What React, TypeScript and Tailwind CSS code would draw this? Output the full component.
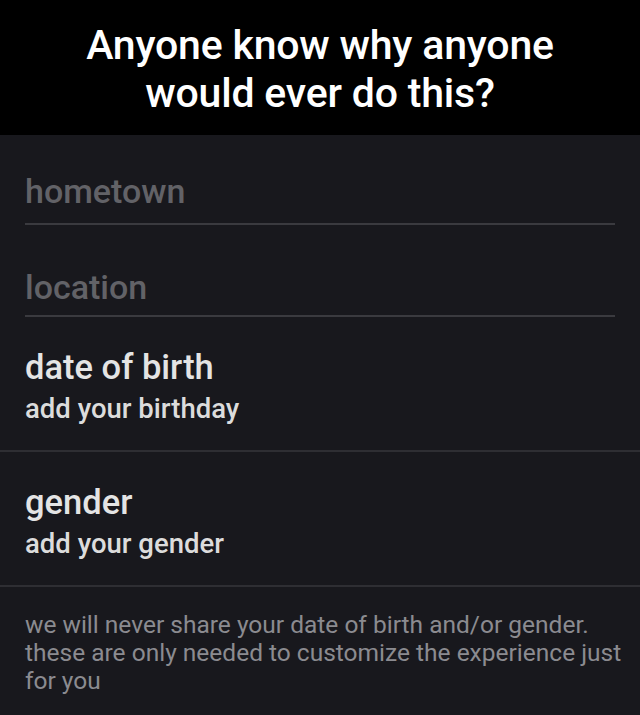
export default function App() {
  return (
    <div className="flex min-h-[715px] w-[640px] flex-col bg-[#18181d] font-['Roboto',sans-serif]">
      <div className="flex h-[135px] flex-col items-center bg-black pt-[21px] text-center text-[41px] font-medium leading-[48px] tracking-[-0.2px] text-white">
        <p>Anyone know why anyone</p>
        <p>would ever do this?</p>
      </div>

      <div className="px-[25px] pt-[36px] font-medium">
        <p className="text-[34px] leading-[40px] text-[#626267]">hometown</p>
        <div className="mt-[12px] h-[2px] bg-[#3a3a3f]" />
        <p className="mt-[42px] text-[34px] leading-[40px] text-[#626267]">location</p>
        <div className="mt-[8px] h-[2px] bg-[#3a3a3f]" />
      </div>

      <div className="border-b-2 border-[#2e2e33] px-[25px] pb-[24px] pt-[30px] font-medium">
        <p className="text-[34.5px] leading-[40px] text-[#e4e4e4]">date of birth</p>
        <p className="mt-[5px] text-[27.5px] leading-[34px] text-[#dcdcdc]">add your birthday</p>
      </div>

      <div className="border-b-2 border-[#2e2e33] px-[25px] pb-[24px] pt-[30px] font-medium">
        <p className="text-[34.5px] leading-[40px] text-[#e4e4e4]">gender</p>
        <p className="mt-[5px] text-[27.5px] leading-[34px] text-[#dcdcdc]">add your gender</p>
      </div>

      <div className="pl-[25px] pr-[10px] pt-[24px] text-[24.5px] leading-[28px] text-[#8b8b90]">
        <p>we will never share your date of birth and/or gender.</p>
        <p>these are only needed to customize the experience just for you</p>
      </div>
    </div>
  );
}
